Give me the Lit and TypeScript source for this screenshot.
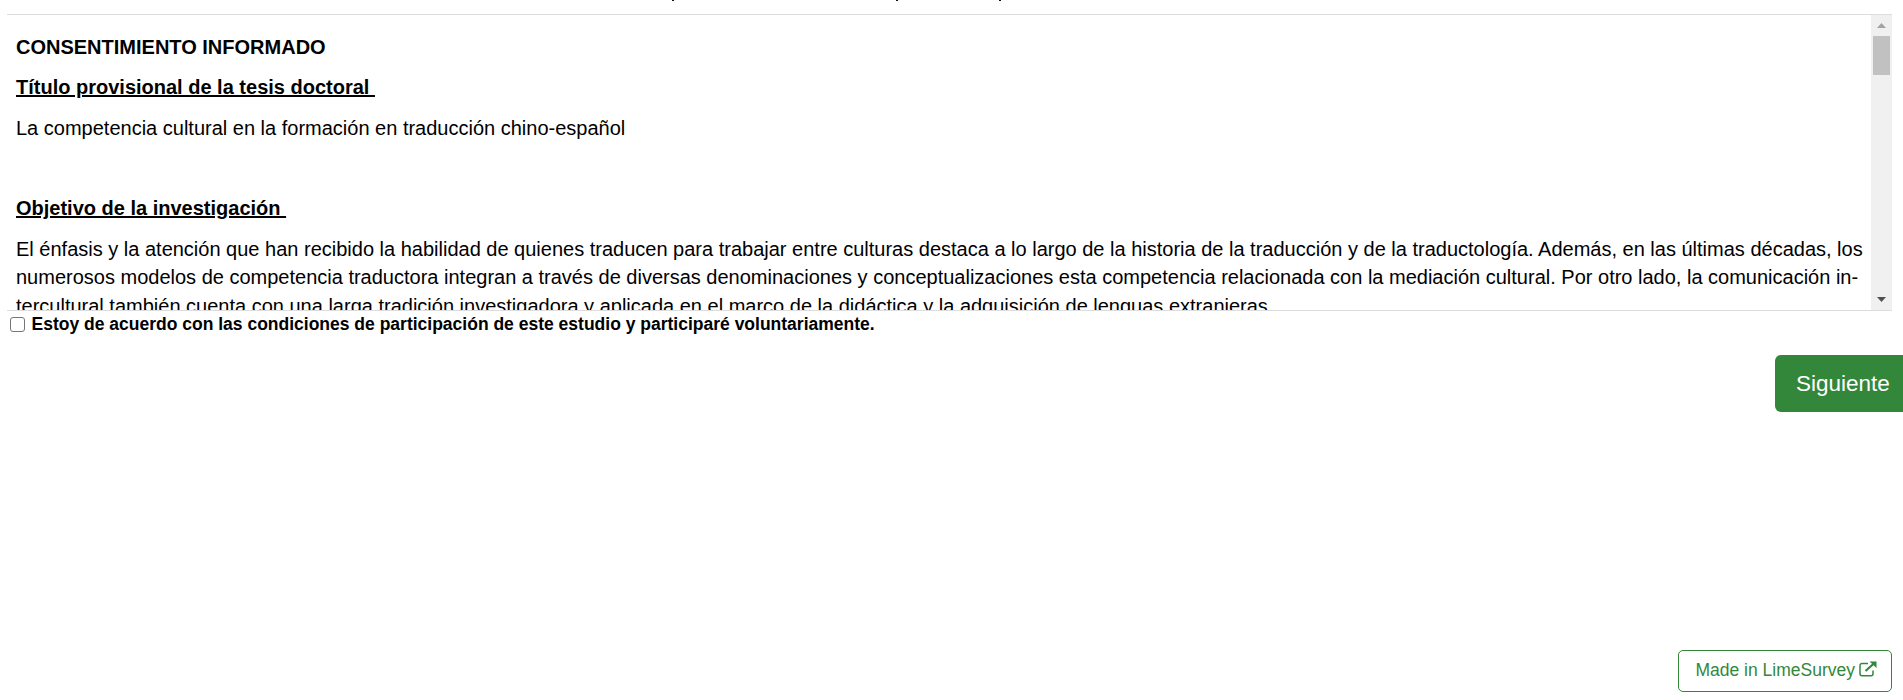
import { LitElement, html, css } from "lit";
import { customElement } from "lit/decorators.js";

@customElement("app-root")
export class AppRoot extends LitElement {
  static styles = css`
    :host { display: block; height: 700px; overflow: hidden; background: #fff; font-family: "Liberation Sans", Arial, sans-serif; color: #000; }
    .page { display: flex; flex-direction: column; height: 700px; }
    .ticks { display: flex; height: 3px; margin-bottom: 11px; flex: none; position: relative; }
    .tick { position: absolute; top: 0; width: 2px; height: 1px; background: #111; }
    .box { flex: none; margin: 0 11px 0 7px; height: 297px; border-top: 1px solid #ddd; border-bottom: 1px solid #ddd; box-sizing: border-box; display: flex; }
    .content { flex: 1; min-width: 0; overflow: hidden; padding: 17.5px 5px 0 9px; font-size: 20px; line-height: 28.57px; }
    .content p { margin: 0 0 12.3px; }
    .gap { height: 38.7px; }
    .title { font-weight: 700; }
    .sub { font-weight: 700; text-decoration: underline; }
    .bar { flex: none; width: 21px; background: #f0f0f0; display: flex; flex-direction: column; align-items: center; }
    .arrow { flex: none; height: 21px; display: flex; align-items: center; justify-content: center; }
    .thumb { flex: none; width: 17px; height: 39px; background: #c1c1c1; }
    .fill { flex: 1; }
    .agree { display: flex; align-items: center; margin: 2px 0 0 10px; font-size: 17.5px; font-weight: 700; line-height: 22px; flex: none; }
    .cb { box-sizing: border-box; width: 15px; height: 15px; border: 1.5px solid #767676; border-radius: 3px; margin-right: 6.5px; background: #fff; }
    .nav { flex: none; display: flex; justify-content: flex-end; margin-top: 20px; }
    .next { width: 128px; height: 57px; box-sizing: border-box; background: #33873a; color: #fff; border-radius: 6px 0 0 6px; font-size: 22.5px; padding-left: 21px; display: flex; align-items: center; }
    .spacer { flex: 1; }
    .foot { flex: none; display: flex; justify-content: flex-end; margin: 0 11px 8px 0; }
    .made { box-sizing: border-box; height: 42px; padding: 0 14px 2px 16px; border: 1px solid #33873a; border-radius: 5px; color: #33873a; font-size: 17.5px; display: flex; align-items: center; gap: 4px; }
    .made svg { margin-top: -2px; }
  `;
  render() {
    return html`<div class="page">
      <div class="ticks">
        <span class="tick" style="left:672px"></span>
        <span class="tick" style="left:896px"></span>
        <span class="tick" style="left:999px"></span>
      </div>
      <div class="box">
        <div class="content">
          <p class="title">CONSENTIMIENTO INFORMADO</p>
          <p class="sub">Título provisional de la tesis doctoral&nbsp;</p>
          <p>La competencia cultural en la formación en traducción chino-español</p>
          <div class="gap"></div>
          <p class="sub">Objetivo de la investigación&nbsp;</p>
          <p>El énfasis y la atención que han recibido la habilidad de quienes traducen para trabajar entre culturas destaca a lo largo de la historia de la traducción y de la traductología. Además, en las últimas décadas, los numerosos modelos de competencia traductora integran a través de diversas denominaciones y conceptualizaciones esta competencia relacionada con la mediación cultural. Por otro lado, la comunicación in-tercultural también cuenta con una larga tradición investigadora y aplicada en el marco de la didáctica y la adquisición de lenguas extranjeras.</p>
        </div>
        <div class="bar">
          <div class="arrow"><svg width="9" height="5" viewBox="0 0 9 5"><path d="M4.5 0 9 5H0z" fill="#a3a3a3"/></svg></div>
          <div class="thumb"></div>
          <div class="fill"></div>
          <div class="arrow"><svg width="9" height="5" viewBox="0 0 9 5"><path d="M0 0h9L4.5 5z" fill="#505050"/></svg></div>
        </div>
      </div>
      <div class="agree"><span class="cb"></span>Estoy de acuerdo con las condiciones de participación de este estudio y participaré voluntariamente.</div>
      <div class="nav"><div class="next">Siguiente</div></div>
      <div class="spacer"></div>
      <div class="foot"><div class="made">Made in LimeSurvey
        <svg width="18" height="16" viewBox="0 0 18 16" fill="none" stroke="#33873a"><path d="M14 9.5v3.2a2 2 0 0 1-2 2H3a2 2 0 0 1-2-2V4.5a2 2 0 0 1 2-2h6" stroke-width="1.5"/><path d="M6.5 10 16 1.5" stroke-width="2.2"/><path d="M10.5 .5H17.5V7z" fill="#33873a" stroke="none"/></svg>
      </div></div>
    </div>`;
  }
}
